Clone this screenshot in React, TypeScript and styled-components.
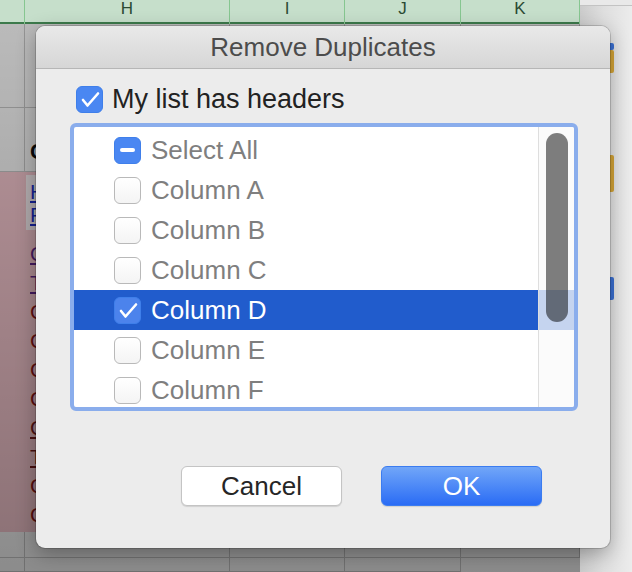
import React from "react";
import styled, { createGlobalStyle } from "styled-components";

const GlobalStyle = createGlobalStyle`
  html, body {
    margin: 0;
    padding: 0;
  }
  body {
    width: 632px;
    height: 572px;
    overflow: hidden;
    background: #e6e6e6;
    font-family: "Liberation Sans", Arial, sans-serif;
  }
`;

// Whole window
const Screen = styled.div`
  position: relative;
  display: flex;
  width: 632px;
  height: 572px;
  overflow: hidden;
`;

// Spreadsheet behind the sheet dialog
const Sheet = styled.div`
  display: flex;
  flex-direction: column;
  width: 580px;
  flex: none;
`;

const HeaderRow = styled.div`
  display: grid;
  grid-template-columns: 25px 205px 115px 116px 119px;
  height: 22px;
  flex: none;
  border-bottom: 2px solid #3c7a4b;
  background: #c6dfcb;
`;

const HeaderCell = styled.div`
  display: flex;
  justify-content: center;
  align-items: flex-end;
  padding-bottom: 8px;
  box-sizing: border-box;
  border-right: 1px solid #86c690;
  color: #2b4a33;
  font-size: 17px;
  line-height: 1;
`;

const SheetBody = styled.div`
  position: relative;
  flex: 1;
  display: grid;
  grid-template-columns: 25px 205px 115px 116px 119px;
  grid-template-rows: 84px 64px 360px 26px 1fr;
  background: #bababa;

  &::after {
    content: "";
    position: absolute;
    inset: 0;
    background: linear-gradient(180deg, rgba(0, 0, 0, 0) 0%, rgba(0, 0, 0, 0.25) 100%);
    pointer-events: none;
  }
`;

const Cell = styled.div<{ $span?: number }>`
  grid-column: span ${(p) => p.$span ?? 1};
  border-right: 1px solid #959595;
  border-bottom: 1px solid #959595;
  overflow: hidden;
`;

const TitleCell = styled(Cell)`
  display: flex;
  align-items: flex-end;
  padding: 0 0 6px 5px;
  box-sizing: border-box;
  font-size: 22px;
  font-weight: bold;
  color: #0b0b0b;
`;

const PinkCell = styled(Cell)`
  display: flex;
  flex-direction: column;
  background: #b9969c;
  border-right: none;
  border-bottom: none;
  padding-left: 26px;
  box-sizing: border-box;
`;

const NavBox = styled.div`
  margin-top: 3px;
  height: 55px;
  padding: 5px 0 0 4px;
  box-sizing: border-box;
  background: #bdb6b8;
`;

const SheetLink = styled.div<{ $color: string; $underline?: boolean }>`
  height: 29px;
  display: flex;
  align-items: center;
  padding-left: 4px;
  white-space: nowrap;
  font-size: 21px;
  color: ${(p) => p.$color};
  text-decoration: ${(p) => (p.$underline ? "underline" : "none")};
`;

const NavLink = styled(SheetLink)`
  height: 23px;
  padding-left: 0;
`;

const LinkList = styled.div`
  margin-top: 9px;
`;

// Right edge of the window
const SideStrip = styled.div`
  flex: 1;
  display: flex;
  flex-direction: column;
  background: linear-gradient(90deg, #cbcbcb 0%, #dedede 45%, #ececec 100%);
`;

const StripTop = styled.div`
  height: 5px;
  flex: none;
  border-bottom: 1px solid #c3c3c3;
  background: #e9e9e9;
`;

const Marker = styled.div<{ $color: string; $top: number; $height: number }>`
  width: 6px;
  margin-left: 28px;
  margin-top: ${(p) => p.$top}px;
  height: ${(p) => p.$height}px;
  border-radius: 2px;
  background: ${(p) => p.$color};
`;

// Dialog
const Dialog = styled.div`
  position: absolute;
  left: 36px;
  top: 26px;
  width: 574px;
  height: 522px;
  display: flex;
  flex-direction: column;
  background: #ececec;
  border-radius: 9px;
  box-shadow: 0 0 0 1px rgba(0, 0, 0, 0.16), 0 6px 20px rgba(0, 0, 0, 0.3);
  overflow: hidden;
`;

const TitleBar = styled.div`
  height: 42px;
  flex: none;
  display: flex;
  align-items: center;
  justify-content: center;
  background: linear-gradient(180deg, #e9e9e9, #d6d6d6);
  border-bottom: 1px solid #b6b6b6;
  color: #4c4c4c;
  font-size: 26px;
`;

const DialogBody = styled.div`
  flex: 1;
  display: flex;
  flex-direction: column;
  padding: 16px 0 0 34px;
`;

const HeaderOption = styled.label`
  display: flex;
  align-items: center;
  gap: 9px;
  height: 28px;
  margin-left: 6px;
  font-size: 27px;
  color: #222222;
`;

const CheckBox = styled.span<{ $on?: boolean; $inRow?: boolean }>`
  width: 27px;
  height: 27px;
  flex: none;
  display: flex;
  align-items: center;
  justify-content: center;
  box-sizing: border-box;
  border-radius: 6px;
  border: 1px solid ${(p) => (p.$on ? "#3f7fea" : "#b9b9b9")};
  background: ${(p) =>
    p.$on
      ? p.$inRow
        ? "#4c83ec"
        : "#4a87f2"
      : "linear-gradient(180deg, #ffffff, #f4f4f4)"};
`;

const Dash = styled.span`
  width: 15px;
  height: 4px;
  border-radius: 2px;
  background: #ffffff;
`;

const ListFrame = styled.div`
  position: relative;
  width: 508px;
  height: 288px;
  margin-top: 10px;
  box-sizing: border-box;
  border: 4px solid #8aadec;
  border-radius: 6px;
  background: #ffffff;
  overflow: hidden;
`;

const Rows = styled.div`
  padding-top: 3px;
`;

const Row = styled.div<{ $selected?: boolean }>`
  height: 40px;
  display: flex;
  align-items: center;
  gap: 10px;
  padding-left: 40px;
  background: ${(p) => (p.$selected ? "#215ccc" : "transparent")};
  color: ${(p) => (p.$selected ? "#ffffff" : "#7f7f7f")};
  font-size: 26px;
`;

const ScrollTrack = styled.div`
  position: absolute;
  top: 0;
  right: 0;
  bottom: 0;
  width: 36px;
  box-sizing: border-box;
  border-left: 1px solid #dedede;
  background: rgba(250, 250, 250, 0.76);
  display: flex;
  justify-content: center;
`;

const ScrollThumb = styled.div`
  width: 22px;
  height: 189px;
  margin-top: 6px;
  border-radius: 11px;
  background: rgba(0, 0, 0, 0.5);
`;

const ButtonRow = styled.div`
  display: flex;
  justify-content: flex-end;
  gap: 39px;
  padding-right: 68px;
  margin-top: 55px;
`;

const Button = styled.button<{ $primary?: boolean }>`
  width: 161px;
  height: 40px;
  box-sizing: border-box;
  border-radius: 6px;
  font-family: "Liberation Sans", Arial, sans-serif;
  font-size: 26px;
  border: 1px solid ${(p) => (p.$primary ? "#3b7cf0" : "#c4c4c4")};
  color: ${(p) => (p.$primary ? "#ffffff" : "#262626")};
  background: ${(p) =>
    p.$primary ? "linear-gradient(180deg, #71a6f8, #2a6cf5)" : "#ffffff"};
  box-shadow: 0 1px 1px rgba(0, 0, 0, 0.12);
  padding: 0;
`;

const Check = () => (
  <svg width="27" height="27" viewBox="0 0 27 27" style={{ position: "absolute" }}>
    <polyline
      points="6,14 10.5,19.5 21,7.5"
      fill="none"
      stroke="#ffffff"
      strokeWidth="2.6"
      strokeLinecap="round"
      strokeLinejoin="round"
    />
  </svg>
);

const CheckWrap = styled.span`
  position: relative;
  width: 27px;
  height: 27px;
`;

const columns = ["A", "B", "C", "D", "E", "F", "G"];

const links: { text: string; color: string; underline?: boolean }[] = [
  { text: "Overview", color: "#4a1d68", underline: true },
  { text: "Topics", color: "#4a1d68", underline: true },
  { text: "Copy", color: "#6a1010" },
  { text: "Count", color: "#6a1010" },
  { text: "Cells", color: "#6a1010" },
  { text: "Clear", color: "#6a1010" },
  { text: "Contact", color: "#5a1414", underline: true },
  { text: "Tables", color: "#5a1414", underline: true },
  { text: "Charts", color: "#6a1010" },
  { text: "Copy", color: "#6a1010" },
];

export default function App() {
  return (
    <>
      <GlobalStyle />
      <Screen>
        <Sheet>
          <HeaderRow>
            <HeaderCell />
            <HeaderCell>H</HeaderCell>
            <HeaderCell>I</HeaderCell>
            <HeaderCell>J</HeaderCell>
            <HeaderCell>K</HeaderCell>
          </HeaderRow>
          <SheetBody>
            <Cell />
            <Cell />
            <Cell />
            <Cell />
            <Cell />
            <Cell />
            <TitleCell>Contents</TitleCell>
            <Cell />
            <Cell />
            <Cell />
            <PinkCell $span={2}>
              <NavBox>
                <NavLink $color="#17239a" $underline>Home</NavLink>
                <NavLink $color="#17239a" $underline>Find</NavLink>
              </NavBox>
              <LinkList>
                {links.map((l, i) => (
                  <SheetLink key={i} $color={l.color} $underline={l.underline}>
                    {l.text}
                  </SheetLink>
                ))}
              </LinkList>
            </PinkCell>
            <Cell />
            <Cell />
            <Cell />
            <Cell />
            <Cell />
            <Cell />
            <Cell />
            <Cell />
            <Cell />
            <Cell />
            <Cell />
            <Cell />
          </SheetBody>
        </Sheet>

        <SideStrip>
          <StripTop />
          <Marker $color="#3a6fd0" $top={37} $height={7} />
          <Marker $color="#d2a236" $top={0} $height={23} />
          <Marker $color="#d2a236" $top={82} $height={37} />
          <Marker $color="#3a6fd0" $top={85} $height={23} />
        </SideStrip>

        <Dialog>
          <TitleBar>Remove Duplicates</TitleBar>
          <DialogBody>
            <HeaderOption>
              <CheckBox $on>
                <CheckWrap>
                  <Check />
                </CheckWrap>
              </CheckBox>
              My list has headers
            </HeaderOption>

            <ListFrame>
              <Rows>
                <Row>
                  <CheckBox $on>
                    <Dash />
                  </CheckBox>
                  Select All
                </Row>
                {columns.map((c) => (
                  <Row key={c} $selected={c === "D"}>
                    <CheckBox $on={c === "D"} $inRow>
                      {c === "D" && (
                        <CheckWrap>
                          <Check />
                        </CheckWrap>
                      )}
                    </CheckBox>
                    Column {c}
                  </Row>
                ))}
              </Rows>
              <ScrollTrack>
                <ScrollThumb />
              </ScrollTrack>
            </ListFrame>

            <ButtonRow>
              <Button>Cancel</Button>
              <Button $primary>OK</Button>
            </ButtonRow>
          </DialogBody>
        </Dialog>
      </Screen>
    </>
  );
}
